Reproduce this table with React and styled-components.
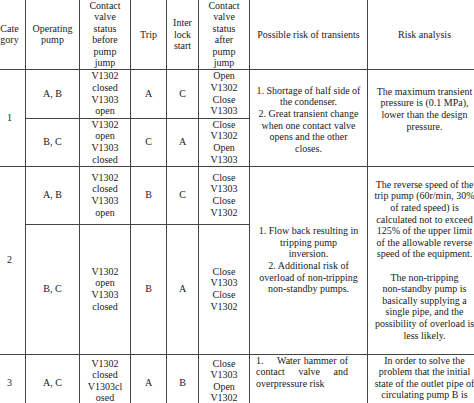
import React from "react";
import styled, { createGlobalStyle } from "styled-components";

const Global = createGlobalStyle`
  html, body {
    margin: 0;
    padding: 0;
    background: #ffffff;
    overflow: hidden;
  }
  body {
    width: 474px;
    height: 403px;
  }
`;

const Table = styled.table`
  border-collapse: collapse;
  table-layout: fixed;
  width: 488px;
  margin-left: -7px;
  font-family: "Liberation Serif", "Times New Roman", serif;
  font-size: 10px;
  line-height: 11.6px;
  color: #1a1a1a;
`;

const Row = styled.tr`
  height: ${p => p.$h}px;
`;

const Cell = styled.td`
  border: 1px solid #444444;
  padding: ${p => p.$padTop || 0}px 2px ${p => p.$padBottom || 0}px;
  vertical-align: ${p => (p.$top ? "top" : "middle")};
  text-align: center;
  overflow: hidden;
`;

const HeadCell = styled(Cell).attrs({ as: "th" })`
  border-top: none;
  font-weight: normal;
  line-height: 11.4px;
`;

const Justified = styled.div`
  width: 92px;
  padding-left: 4px;
  text-align: left;
`;

const JLine = styled.div`
  display: flex;
  justify-content: space-between;
`;

const Marker = styled.span`
  width: 21px;
  flex: none;
`;

const Words = styled.span`
  flex: 1;
  display: flex;
  justify-content: space-between;
`;

const Lines = ({ lines }) =>
  lines.map((l, i) => (
    <React.Fragment key={i}>
      {i > 0 && <br />}
      {l}
    </React.Fragment>
  ));

const spread = text => text.split(" ").map((w, i) => <span key={i}>{w}</span>);

export default function App() {
  return (
    <>
      <Global />
      <Table>
        <colgroup>
          <col style={{ width: 32 }} />
          <col style={{ width: 54 }} />
          <col style={{ width: 51 }} />
          <col style={{ width: 36 }} />
          <col style={{ width: 32 }} />
          <col style={{ width: 51 }} />
          <col style={{ width: 118 }} />
          <col style={{ width: 114 }} />
        </colgroup>
        <thead>
          <Row $h={69}>
            <HeadCell><Lines lines={["Cate", "gory"]} /></HeadCell>
            <HeadCell><Lines lines={["Operating", "pump"]} /></HeadCell>
            <HeadCell>
              <Lines lines={["Contact", "valve", "status", "before", "pump", "jump"]} />
            </HeadCell>
            <HeadCell>Trip</HeadCell>
            <HeadCell><Lines lines={["Inter", "lock", "start"]} /></HeadCell>
            <HeadCell>
              <Lines lines={["Contact", "valve", "status", "after", "pump", "jump"]} />
            </HeadCell>
            <HeadCell>Possible risk of transients</HeadCell>
            <HeadCell>Risk analysis</HeadCell>
          </Row>
        </thead>
        <tbody>
          <Row $h={49}>
            <Cell rowSpan={2}>1</Cell>
            <Cell>A, B</Cell>
            <Cell><Lines lines={["V1302", "closed", "V1303", "open"]} /></Cell>
            <Cell>A</Cell>
            <Cell>C</Cell>
            <Cell><Lines lines={["Open", "V1302", "Close", "V1303"]} /></Cell>
            <Cell rowSpan={2} $padTop={4}>
              <Lines
                lines={[
                  "1. Shortage of half side of",
                  "the condenser.",
                  "2. Great transient change",
                  "when one contact valve",
                  "opens and the other",
                  "closes."
                ]}
              />
            </Cell>
            <Cell rowSpan={2} $padBottom={17}>
              <Lines
                lines={[
                  "The maximum transient",
                  "pressure is (0.1 MPa),",
                  "lower than the design",
                  "pressure."
                ]}
              />
            </Cell>
          </Row>
          <Row $h={48}>
            <Cell>B, C</Cell>
            <Cell><Lines lines={["V1302", "open", "V1303", "closed"]} /></Cell>
            <Cell>C</Cell>
            <Cell>A</Cell>
            <Cell><Lines lines={["Close", "V1302", "Open", "V1303"]} /></Cell>
          </Row>
          <Row $h={58}>
            <Cell rowSpan={2}>2</Cell>
            <Cell>A, B</Cell>
            <Cell><Lines lines={["V1302", "closed", "V1303", "open"]} /></Cell>
            <Cell>B</Cell>
            <Cell>C</Cell>
            <Cell><Lines lines={["Close", "V1303", "Close", "V1302"]} /></Cell>
            <Cell rowSpan={2}>
              <Lines
                lines={[
                  "1. Flow back resulting in",
                  "tripping pump",
                  "inversion.",
                  "2. Additional risk of",
                  "overload of non-tripping",
                  "non-standby pumps."
                ]}
              />
            </Cell>
            <Cell rowSpan={2}>
              <Lines
                lines={[
                  "The reverse speed of the",
                  "trip pump (60r/min, 30%",
                  "of rated speed) is",
                  "calculated not to exceed",
                  "125% of the upper limit",
                  "of the allowable reverse",
                  "speed of the equipment.",
                  "\u00a0",
                  "The non-tripping",
                  "non-standby pump is",
                  "basically supplying a",
                  "single pipe, and the",
                  "possibility of overload is",
                  "less likely."
                ]}
              />
            </Cell>
          </Row>
          <Row $h={130}>
            <Cell>B, C</Cell>
            <Cell><Lines lines={["V1302", "open", "V1303", "closed"]} /></Cell>
            <Cell>B</Cell>
            <Cell>A</Cell>
            <Cell><Lines lines={["Close", "V1303", "Close", "V1302"]} /></Cell>
          </Row>
          <Row $h={60}>
            <Cell $top $padTop={22}>3</Cell>
            <Cell $top $padTop={22}>A, C</Cell>
            <Cell $top $padTop={3}>
              <Lines lines={["V1302", "closed", "V1303cl", "osed"]} />
            </Cell>
            <Cell $top $padTop={22}>A</Cell>
            <Cell $top $padTop={22}>B</Cell>
            <Cell $top $padTop={3}>
              <Lines lines={["Close", "V1303", "Open", "V1302"]} />
            </Cell>
            <Cell $top>
              <Justified>
                <JLine>
                  <Marker>1.</Marker>
                  <Words>{spread("Water hammer of")}</Words>
                </JLine>
                <JLine>{spread("contact valve and")}</JLine>
                <div>overpressure risk</div>
              </Justified>
            </Cell>
            <Cell $top>
              <Lines
                lines={[
                  "In order to solve the",
                  "problem that the initial",
                  "state of the outlet pipe of",
                  "circulating pump B is"
                ]}
              />
            </Cell>
          </Row>
        </tbody>
      </Table>
    </>
  );
}
